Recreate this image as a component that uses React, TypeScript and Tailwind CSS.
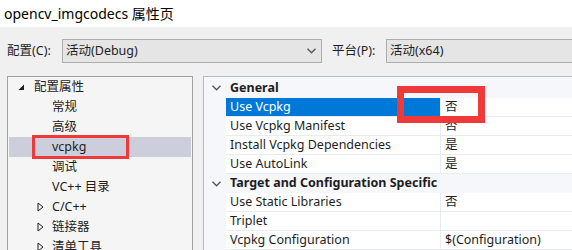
const font = {
  fontFamily: '"Noto Sans", "Noto Sans CJK SC", sans-serif',
};

const Chevron = ({ className }: { className?: string }) => (
  <svg width="9" height="6" viewBox="0 0 9 6" className={className}>
    <polyline points="0.5,0.8 4.5,4.8 8.5,0.8" fill="none" stroke="#555" strokeWidth="1.3" />
  </svg>
);

const ExpandedTri = () => (
  <svg width="7" height="7" viewBox="0 0 7 7" className="shrink-0">
    <polygon points="6,0.5 6,6 0.5,6" fill="#1e1e1e" />
  </svg>
);

const CollapsedTri = () => (
  <svg width="7" height="10" viewBox="0 0 7 10" className="shrink-0">
    <polygon points="1,1 6,5 1,9" fill="none" stroke="#1e1e1e" strokeWidth="1" />
  </svg>
);

interface TreeItem {
  label: string;
  level: number;
  tri?: "open" | "closed";
  selected?: boolean;
}

const treeItems: TreeItem[] = [
  { label: "配置属性", level: 0, tri: "open" },
  { label: "常规", level: 1 },
  { label: "高级", level: 1 },
  { label: "vcpkg", level: 1, selected: true },
  { label: "调试", level: 1 },
  { label: "VC++ 目录", level: 1 },
  { label: "C/C++", level: 1, tri: "closed" },
  { label: "链接器", level: 1, tri: "closed" },
  { label: "清单工具", level: 1, tri: "closed" },
];

interface GridRow {
  name: string;
  value?: string;
  header?: boolean;
  selected?: boolean;
}

const gridRows: GridRow[] = [
  { name: "General", header: true },
  { name: "Use Vcpkg", value: "否", selected: true },
  { name: "Use Vcpkg Manifest", value: "否" },
  { name: "Install Vcpkg Dependencies", value: "是" },
  { name: "Use AutoLink", value: "是" },
  { name: "Target and Configuration Specific", header: true },
  { name: "Use Static Libraries", value: "否" },
  { name: "Triplet", value: "" },
  { name: "Vcpkg Configuration", value: "$(Configuration)" },
];

const App = () => {
  const renderTreeRow = (item: TreeItem) => (
    <div
      key={item.label}
      className={`h-[20px] flex items-center ${item.selected ? "bg-[#cccedb]" : ""}`}
    >
      {item.level === 0 ? (
        <>
          <span className="w-[10px] ml-[9px] flex justify-start">
            <ExpandedTri />
          </span>
          <span className="ml-[6px]">{item.label}</span>
        </>
      ) : (
        <>
          <span className="w-[14px] ml-[28px] flex justify-start">
            {item.tri === "closed" && <CollapsedTri />}
          </span>
          <span className="ml-[1px]">{item.label}</span>
        </>
      )}
    </div>
  );

  const renderGridRow = (row: GridRow) =>
    row.header ? (
      <div key={row.name} className="h-[19px] flex items-center bg-[#f5f7fa] first:h-[21px] first:pt-[1px]">
        <span className="w-[22px] flex justify-center pl-[2px]">
          <Chevron />
        </span>
        <span className="pl-[4px] font-bold whitespace-nowrap text-[#1e1e1e]">{row.name}</span>
      </div>
    ) : (
      <div key={row.name} className="h-[19px] flex">
        <span className="w-[22px] shrink-0 bg-[#f5f7fa]" />
        <span
          className={`w-[214px] shrink-0 pl-[4px] pt-[1px] flex items-center border-b border-[#e8ebf0] whitespace-nowrap ${
            row.selected ? "bg-[#0078d7] text-white" : "bg-white text-[#1e1e1e]"
          }`}
        >
          {row.name}
        </span>
        <span className="flex-1 pl-[4px] pt-[1px] flex items-center bg-white border-b border-l border-[#e8ebf0] text-[#1e1e1e]">
          {row.value}
        </span>
      </div>
    );

  return (
    <div
      className="relative w-[572px] h-[250px] overflow-hidden bg-[#f0f0f0] text-[12.5px] text-[#1e1e1e]"
      style={font}
    >
      <div className="h-[27px] bg-white flex items-center pl-[4px] text-[14px] text-black">
        opencv_imgcodecs 属性页
      </div>

      <div className="mt-[12px] h-[24px] flex items-center">
        <span className="ml-[7px] w-[55px]">配置(C):</span>
        <div className="w-[260px] h-[24px] border border-[#adadad] bg-[#e5e5e5] flex items-center justify-between pl-[3px] pr-[5px]">
          <span>活动(Debug)</span>
          <Chevron />
        </div>
        <span className="ml-[10px] w-[54px]">平台(P):</span>
        <div className="flex-1 h-[24px] border border-[#adadad] border-r-0 bg-[#e5e5e5] flex items-center pl-[3px]">
          活动(x64)
        </div>
      </div>

      <div className="mt-[13px] flex h-[200px]">
        <div className="ml-[7px] w-[186px] border border-[#a0a0a0] bg-[#f5f5f5] py-0 px-[1px]">
          {treeItems.map(renderTreeRow)}
        </div>
        <div className="ml-[10px] flex-1 border-t border-l border-[#b4b9c3] bg-[#f5f7fa]">
          {gridRows.map(renderGridRow)}
        </div>
      </div>

      <div className="absolute left-[32px] top-[135px] w-[97px] h-[24px] border-[3px] border-[#f03a3a]" />
      <div className="absolute left-[397px] top-[86px] w-[88px] h-[37px] border-[7px] border-[#f03a3a]" />
    </div>
  );
};

export default App;
